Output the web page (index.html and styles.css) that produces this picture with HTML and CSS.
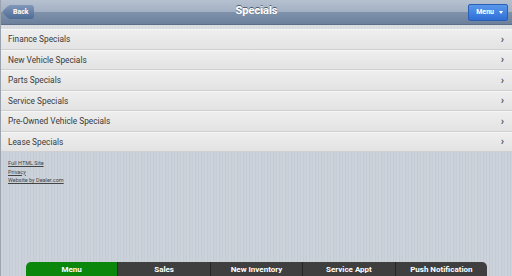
FILE: index.html
```html
<!DOCTYPE html>
<html lang="en">
<head>
    <meta charset="UTF-8">
    <meta name="viewport" content="width=device-width, initial-scale=1.0">
    <title>Specials</title>
    <link rel="stylesheet" href="styles.css">
</head>
<body>
    <div class="page">
        <header class="top-bar">
            <a class="back-btn" href="#">Back</a>
            <h1 class="title">Specials</h1>
            <a class="menu-btn" href="#">Menu <span class="caret"></span></a>
        </header>
        <div class="top-strip"></div>

        <ul class="list">
            <li class="list-item">Finance Specials<span class="chevron">&#8250;</span></li>
            <li class="list-item">New Vehicle Specials<span class="chevron">&#8250;</span></li>
            <li class="list-item">Parts Specials<span class="chevron">&#8250;</span></li>
            <li class="list-item">Service Specials<span class="chevron">&#8250;</span></li>
            <li class="list-item">Pre-Owned Vehicle Specials<span class="chevron">&#8250;</span></li>
            <li class="list-item">Lease Specials<span class="chevron">&#8250;</span></li>
        </ul>

        <div class="footer-links">
            <a href="#">Full HTML Site</a>
            <a href="#">Privacy</a>
            <a href="#">Website by Dealer.com</a>
        </div>

        <nav class="tab-bar">
            <a class="tab active" href="#">Menu</a>
            <a class="tab" href="#">Sales</a>
            <a class="tab" href="#">New Inventory</a>
            <a class="tab" href="#">Service Appt</a>
            <a class="tab" href="#">Push Notification</a>
        </nav>
    </div>
</body>
</html>
```

FILE: styles.css
```css
html, body {
    margin: 0;
    padding: 0;
    height: 100%;
}

body {
    font-family: Roboto, "Liberation Sans", sans-serif;
    background-color: #c9d0d8;
    background-image: repeating-linear-gradient(90deg,
        #c6cdd6 0px, #c6cdd6 1px,
        #ccd3db 1px, #ccd3db 3px,
        #c4cbd4 3px, #c4cbd4 4px,
        #cad1d9 4px, #cad1d9 6px);
}

.page {
    display: flex;
    flex-direction: column;
    height: 276px;
    border-left: 1px solid #9aa3ad;
    box-sizing: border-box;
}

/* Header */
.top-bar {
    height: 25px;
    display: flex;
    align-items: center;
    justify-content: space-between;
    padding: 0 4px 0 5px;
    position: relative;
    background: linear-gradient(to bottom, #b6c1d0 0%, #a4b1c3 48%, #7f92ab 52%, #6c809c 100%);
    border-bottom: 1px solid #5d6f88;
    box-sizing: border-box;
}

.title {
    position: absolute;
    left: 0;
    right: 0;
    top: 4px;
    margin: 0;
    text-align: center;
    font-size: 11px;
    font-weight: bold;
    color: #fff;
    text-shadow: 0 -1px 0 #4a5a70;
    pointer-events: none;
}

.back-btn {
    position: relative;
    margin-left: 3px;
    height: 14px;
    line-height: 14px;
    padding: 0 5px 0 4px;
    font-size: 7px;
    font-weight: bold;
    color: #fff;
    text-decoration: none;
    background: linear-gradient(to bottom, #8097b8, #4e6c96);
    border-radius: 0 3px 3px 0;
    z-index: 1;
}

.back-btn::before {
    content: "";
    position: absolute;
    left: -5px;
    top: 2px;
    width: 10px;
    height: 10px;
    background: linear-gradient(135deg, #8097b8, #4e6c96);
    transform: rotate(45deg);
    border-radius: 2px;
    z-index: -1;
}

.menu-btn {
    height: 15px;
    line-height: 15px;
    padding: 0 4px 0 7px;
    font-size: 7px;
    font-weight: bold;
    color: #fff;
    text-decoration: none;
    background: linear-gradient(to bottom, #5a98ec, #2f6fd6);
    border: 1px solid #2a5fb4;
    border-radius: 2px;
    display: flex;
    align-items: center;
    gap: 5px;
    z-index: 1;
}

.caret {
    width: 0;
    height: 0;
    border-left: 2.5px solid transparent;
    border-right: 2.5px solid transparent;
    border-top: 3px solid #fff;
}

.top-strip {
    height: 4px;
    background: repeating-linear-gradient(90deg, #d6d9dd 0px, #d6d9dd 1px, #dcdfe2 1px, #dcdfe2 3px);
}

/* List */
.list {
    list-style: none;
    margin: 0;
    padding: 0;
}

.list-item {
    height: 20.5px;
    box-sizing: border-box;
    display: flex;
    align-items: center;
    justify-content: space-between;
    padding: 0 8px 0 7px;
    font-size: 8.3px;
    color: #3a3a3a;
    background: linear-gradient(to bottom, #eeeeee, #e3e3e3);
    border-top: 1px solid #f6f6f6;
    border-bottom: 1px solid #cfcfcf;
}

.chevron {
    font-size: 11px;
    font-weight: bold;
    color: #555;
    line-height: 1;
}

/* Footer */
.footer-links {
    display: flex;
    flex-direction: column;
    padding: 8px 0 0 7px;
    gap: 1px;
}

.footer-links a {
    font-size: 5.5px;
    line-height: 7.5px;
    color: #444;
    text-decoration: underline;
}

/* Tab bar */
.tab-bar {
    margin-top: auto;
    margin-left: 25px;
    display: flex;
    width: 461px;
}

.tab {
    flex: 1;
    height: 14px;
    line-height: 15px;
    text-align: center;
    font-size: 8px;
    font-weight: bold;
    color: #fff;
    text-decoration: none;
    background: #3f3f3f;
    border-left: 1px solid #262626;
}

.tab:first-child {
    border-left: none;
    border-top-left-radius: 5px;
}

.tab:last-child {
    border-top-right-radius: 5px;
}

.tab.active {
    background: #0b870b;
}
```
